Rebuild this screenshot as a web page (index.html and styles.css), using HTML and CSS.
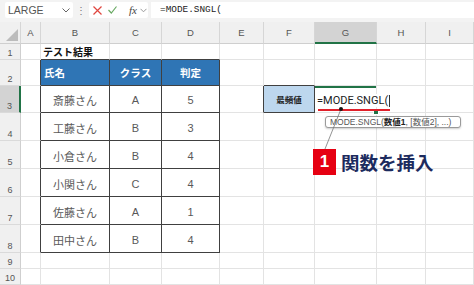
FILE: index.html
```html
<!DOCTYPE html>
<html lang="ja">
<head>
  <meta charset="UTF-8">
  <title>MODE.SNGL</title>
  <link rel="stylesheet" href="styles.css">
</head>
<body>
  <div class="page">
    <!-- Barra de fórmulas -->
    <div class="toolbar">
      <div class="namebox">
        <span>LARGE</span>
        <svg class="chev" width="8" height="5" viewBox="0 0 8 5"><path d="M0.5 0.5 L4 4 L7.5 0.5" fill="none" stroke="#666" stroke-width="1"/></svg>
      </div>
      <div class="dots">⋮</div>
      <div class="fbtns">
        <svg width="9" height="9" viewBox="0 0 9 9"><path d="M0.5 0.5 L8.5 8.5 M8.5 0.5 L0.5 8.5" stroke="#e0463f" stroke-width="1.2"/></svg>
        <svg width="9" height="8" viewBox="0 0 9 8"><path d="M0.5 4 L3.3 7 L8.5 0.5" fill="none" stroke="#6aaa64" stroke-width="1.2"/></svg>
        <span class="fx">fx</span>
        <svg class="chev" width="7" height="5" viewBox="0 0 7 5"><path d="M0.5 0.8 L3.5 3.8 L6.5 0.8" fill="none" stroke="#999" stroke-width="1"/></svg>
      </div>
      <div class="formula">=MODE.SNGL(</div>
    </div>

    <!-- Planilha -->
    <div class="sheet">
      <div class="ch corner"></div>
      <div class="ch">A</div><div class="ch">B</div><div class="ch">C</div><div class="ch">D</div><div class="ch">E</div>
      <div class="ch">F</div><div class="ch sel">G</div><div class="ch">H</div><div class="ch">I</div>

      <div class="rh">1</div>
      <div class="c"></div><div class="c tt title">テスト結果</div><div class="c tt"></div><div class="c tt"></div><div class="c"></div>
      <div class="c"></div><div class="c"></div><div class="c"></div><div class="c"></div>

      <div class="rh">2</div>
      <div class="c tl"></div><div class="c t head left">氏名</div><div class="c t head">クラス</div><div class="c t head">判定</div><div class="c"></div>
      <div class="c tt"></div><div class="c"></div><div class="c"></div><div class="c"></div>

      <div class="rh sel">3</div>
      <div class="c tl"></div><div class="c t">斎藤さん</div><div class="c t">A</div><div class="c t">5</div><div class="c tl"></div>
      <div class="c t label">最頻値</div>
      <div class="c active"><span class="edit">=MODE.SNGL(<i class="cursor"></i></span></div>
      <div class="c"></div><div class="c"></div>

      <div class="rh">4</div>
      <div class="c tl"></div><div class="c t">工藤さん</div><div class="c t">B</div><div class="c t">3</div><div class="c"></div>
      <div class="c"></div><div class="c"></div><div class="c"></div><div class="c"></div>

      <div class="rh">5</div>
      <div class="c tl"></div><div class="c t">小倉さん</div><div class="c t">B</div><div class="c t">4</div><div class="c"></div>
      <div class="c"></div><div class="c"></div><div class="c"></div><div class="c"></div>

      <div class="rh">6</div>
      <div class="c tl"></div><div class="c t">小関さん</div><div class="c t">C</div><div class="c t">4</div><div class="c"></div>
      <div class="c"></div><div class="c"></div><div class="c"></div><div class="c"></div>

      <div class="rh">7</div>
      <div class="c tl"></div><div class="c t">佐藤さん</div><div class="c t">A</div><div class="c t">1</div><div class="c"></div>
      <div class="c"></div><div class="c"></div><div class="c"></div><div class="c"></div>

      <div class="rh">8</div>
      <div class="c tl"></div><div class="c t">田中さん</div><div class="c t">B</div><div class="c t">4</div><div class="c"></div>
      <div class="c"></div><div class="c"></div><div class="c"></div><div class="c"></div>

      <div class="rh">9</div>
      <div class="c"></div><div class="c"></div><div class="c"></div><div class="c"></div><div class="c"></div>
      <div class="c"></div><div class="c"></div><div class="c"></div><div class="c"></div>

      <div class="rh">10</div>
      <div class="c"></div><div class="c"></div><div class="c"></div><div class="c"></div><div class="c"></div>
      <div class="c"></div><div class="c"></div><div class="c"></div><div class="c"></div>
    </div>

    <!-- Anotações sobre a planilha -->
    <div class="underline"></div>
    <svg class="leader" width="474" height="285" viewBox="0 0 474 285">
      <line x1="341" y1="109" x2="325" y2="149" stroke="#777" stroke-width="0.8"/>
      <circle cx="341" cy="109" r="2" fill="#111"/>
    </svg>
    <div class="tip">MODE.SNGL(<b>数値1</b>, [数値2], ...)</div>
    <div class="callout">
      <span class="num">1</span>
      <span class="ctext">関数を挿入</span>
    </div>
  </div>
</body>
</html>
```

FILE: styles.css
```css
/* Cores */
:root {
  --grid: #e3e3e3;
  --head-bg: #f0f0f0;
  --border: #404040;
  --green: #217346;
  --blue: #2f75b5;
}

* {
  box-sizing: border-box;
  margin: 0;
  padding: 0;
}

body {
  background: #fff;
  font-family: "Liberation Sans", "Noto Sans CJK JP", sans-serif;
  color: #333;
  overflow: hidden;
}

.page {
  position: relative;
  width: 474px;
  height: 285px;
  overflow: hidden;
}

/* Barra de fórmulas */
.toolbar {
  display: flex;
  align-items: center;
  height: 22px;
  padding: 0 0 2px 5px;
  background: #f3f3f3;
}
.namebox {
  display: flex;
  align-items: center;
  justify-content: space-between;
  width: 68px;
  height: 16px;
  padding: 0 3px 0 3px;
  background: #fff;
  border-radius: 2px;
  font-size: 10.5px;
  color: #555;
}
.dots {
  width: 16px;
  text-align: center;
  font-size: 10px;
  color: #777;
}
.fbtns {
  display: flex;
  align-items: center;
  gap: 6px;
  width: 59px;
  height: 16px;
  padding-left: 4px;
  background: #fff;
  border-radius: 2px;
}
.fx {
  font-family: "Liberation Serif", serif;
  font-style: italic;
  font-size: 11px;
  color: #444;
  margin-left: 6px;
  margin-right: -3px;
}
.formula {
  flex: 1;
  height: 16px;
  margin-left: 3px;
  padding-left: 9px;
  background: #fff;
  font-family: "Liberation Mono", monospace;
  font-size: 9.4px;
  line-height: 16px;
  color: #222;
}

/* Planilha */
.sheet {
  display: grid;
  grid-template-columns: 21px 20px 69px 52px 58px 44px 51px 62px 49px 1fr;
  grid-template-rows: 22px 16px 26px 27px 28px 28px 28px 28px 28px 16px 16px;
  font-size: 11px;
}
.ch {
  display: flex;
  align-items: center;
  justify-content: center;
  background: var(--head-bg);
  border-right: 1px solid #d6d6d6;
  border-bottom: 1px solid #cfcfcf;
  font-size: 9.5px;
  color: #555;
}
.ch.sel {
  background: #d3d3d3;
  border-bottom: 2px solid var(--green);
}
.corner {
  position: relative;
}
.corner::after {
  content: "";
  position: absolute;
  right: 2px;
  bottom: 2px;
  border-left: 12px solid transparent;
  border-bottom: 12px solid #bcbcbc;
}
.rh {
  display: flex;
  align-items: flex-end;
  justify-content: center;
  padding-bottom: 1px;
  background: var(--head-bg);
  border-right: 1px solid #cfcfcf;
  border-bottom: 1px solid #dadada;
  font-size: 9px;
  color: #555;
}
.rh.sel {
  background: #d3d3d3;
  border-right: 2px solid var(--green);
}
.c {
  display: flex;
  align-items: center;
  justify-content: center;
  border-right: 1px solid var(--grid);
  border-bottom: 1px solid var(--grid);
  color: #595959;
  white-space: nowrap;
}
.c.t {
  border-right-color: var(--border);
  border-bottom-color: var(--border);
  padding-top: 2px;
}
.c.tl {
  border-right-color: var(--border);
}
.c.tt {
  border-bottom-color: var(--border);
}
.title {
  justify-content: flex-start;
  padding-left: 2px;
  font-weight: bold;
  font-size: 10px;
  color: #111;
}
.c.head {
  background: var(--blue);
  color: #fff;
  font-weight: bold;
  font-size: 10.5px;
  padding-top: 0;
}
.c.head.left {
  justify-content: flex-start;
  padding-left: 3px;
}
.c.label {
  background: #bdd7ee;
  color: #222;
  font-weight: bold;
  font-size: 8.5px;
  padding-top: 0;
}
.c.active {
  position: relative;
  justify-content: flex-start;
  align-items: flex-end;
  padding: 0 0 5px 2px;
  box-shadow: inset 0 2px 0 var(--green);
  overflow: visible;
  z-index: 1;
}
.c.active::after {
  content: "";
  position: absolute;
  right: -3px;
  bottom: -3px;
  width: 4px;
  height: 4px;
  background: var(--green);
  border: 1px solid #fff;
}
.edit {
  display: flex;
  align-items: center;
  font-family: Roboto, "Liberation Sans", sans-serif;
  font-size: 11px;
  color: #222;
  background: #fff;
}
.cursor {
  display: inline-block;
  width: 1px;
  height: 12px;
  margin-left: 1px;
  background: #333;
}

/* Anotações */
.underline {
  position: absolute;
  left: 318px;
  top: 109px;
  width: 72px;
  height: 2px;
  background: #e0202a;
  z-index: 2;
}
.leader {
  position: absolute;
  left: 0;
  top: 0;
  z-index: 3;
  pointer-events: none;
}
.tip {
  position: absolute;
  left: 325px;
  top: 116px;
  width: 136px;
  height: 12px;
  padding-left: 4px;
  background: #fff;
  border: 1px solid #9a9a9a;
  border-radius: 3px;
  box-shadow: 0 1px 2px rgba(0,0,0,0.2);
  font-size: 8.5px;
  line-height: 10px;
  color: #555;
  white-space: nowrap;
  z-index: 2;
}
.tip b {
  color: #222;
}
.callout {
  position: absolute;
  left: 313px;
  top: 149px;
  display: flex;
  align-items: center;
  gap: 5px;
  z-index: 2;
}
.num {
  display: flex;
  align-items: center;
  justify-content: center;
  width: 23px;
  height: 26px;
  background: #e60012;
  color: #fff;
  font-weight: bold;
  font-size: 17px;
}
.ctext {
  font-family: "Noto Sans CJK JP", sans-serif;
  font-weight: bold;
  font-size: 18.5px;
  color: #1c2b5e;
}
```
